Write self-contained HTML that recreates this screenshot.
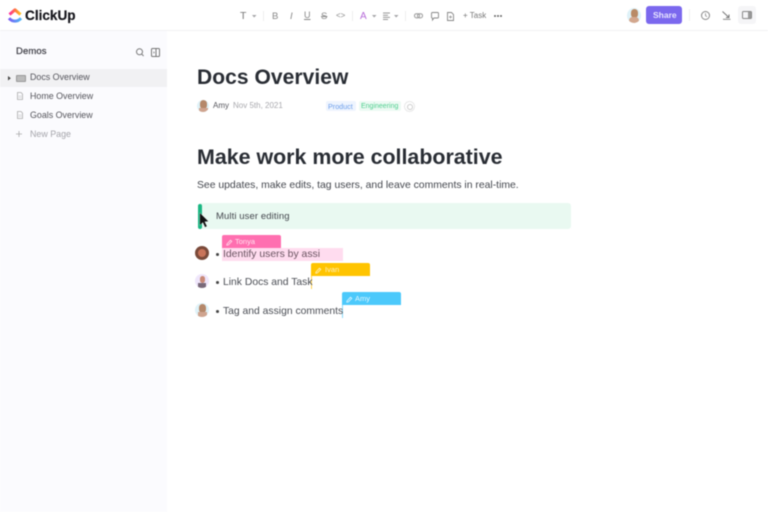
<!DOCTYPE html>
<html><head><meta charset="utf-8">
<style>
html,body{margin:0;padding:0;background:#fff;width:768px;height:512px;overflow:hidden}
#r{position:relative;width:768px;height:512px;overflow:hidden;font-family:"Liberation Sans",sans-serif;filter:blur(.4px)}
.t{position:absolute;white-space:nowrap;line-height:1}
.a{position:absolute}
svg{position:absolute;overflow:visible}
</style></head><body><div id="r">
<div class="a" style="left:0;top:30px;width:768px;height:1px;background:#f1f1f4"></div>
<div class="a" style="left:0;top:31px;width:167px;height:481px;background:#fbfbfe"></div>
<div class="a" style="left:0;top:69px;width:167px;height:18px;background:#f1f1f3"></div>

<!-- logo -->
<svg style="left:8px;top:7px" width="14" height="17" viewBox="0 0 14 17"><defs><linearGradient id="g1" x1="0" x2="1" y1="0" y2="0"><stop offset="0" stop-color="#ff2f9e"/><stop offset=".55" stop-color="#ff7a3c"/><stop offset="1" stop-color="#ffc21f"/></linearGradient><linearGradient id="g2" x1="0" x2="1" y1="0" y2="0"><stop offset="0" stop-color="#7b5cf5"/><stop offset="1" stop-color="#4db8f5"/></linearGradient></defs>
<path d="M1.500 7.500 7 2.800l5.500 4.700" fill="none" stroke="url(#g1)" stroke-width="3" stroke-linejoin="round"/>
<path d="M1 11.300c3.400 3.800 8.600 3.800 12 0" fill="none" stroke="url(#g2)" stroke-width="3"/></svg>
<div class="t" style="left:25px;top:9px;font-size:13.600px;font-weight:700;color:#16161c;-webkit-text-stroke:.2px #16161c">ClickUp</div>

<!-- toolbar -->
<div class="t" style="left:240px;top:11px;font-size:10.500px;color:#777">T</div>
<svg style="left:252px;top:15px" width="5" height="3"><path d="M0 0h4.500L2.200 2.500z" fill="#a5a5a8"/></svg>
<div class="a" style="left:263px;top:11px;width:1px;height:10px;background:#eee"></div>
<div class="t" style="left:272px;top:11.500px;font-size:9.500px;color:#888">B</div>
<div class="t" style="left:290px;top:11.500px;font-size:9.500px;color:#888;font-style:italic">I</div>
<div class="t" style="left:304px;top:11px;font-size:9px;color:#888;text-decoration:underline">U</div>
<div class="t" style="left:321px;top:11.500px;font-size:9.500px;color:#888;text-decoration:line-through">S</div>
<div class="t" style="left:336px;top:12px;font-size:8px;color:#888">&lt;&gt;</div>
<div class="a" style="left:352px;top:11px;width:1px;height:10px;background:#eee"></div>
<div class="t" style="left:360px;top:11.500px;font-size:10px;color:#b56ad8">A</div>
<svg style="left:372px;top:15px" width="5" height="3"><path d="M0 0h4.500L2.200 2.500z" fill="#a5a5a8"/></svg>
<svg style="left:383px;top:12px" width="8" height="8"><path d="M0 1h7M0 3.200h5M0 5.400h7M0 7.500h5" stroke="#999" stroke-width="1"/></svg>
<svg style="left:394px;top:15px" width="5" height="3"><path d="M0 0h4.500L2.200 2.500z" fill="#a5a5a8"/></svg>
<div class="a" style="left:405px;top:11px;width:1px;height:10px;background:#eee"></div>
<svg style="left:414px;top:13px" width="9" height="6"><rect x=".5" y=".7" width="5" height="4.200" rx="2" fill="none" stroke="#999"/><rect x="3.500" y=".7" width="5" height="4.200" rx="2" fill="none" stroke="#999"/></svg>
<svg style="left:431px;top:12px" width="8" height="9"><path d="M.5 1.500Q.5.5 1.500.5h5q1 0 1 1v3.500q0 1-1 1H3L1.500 8V6.200Q.5 6 .5 5z" fill="none" stroke="#888" stroke-width=".9"/></svg>
<svg style="left:447px;top:12px" width="7" height="9"><path d="M.5.500h4l2 2v6h-6z" fill="none" stroke="#888" stroke-width=".9"/><path d="M2 5h3M3.500 3.500v3" stroke="#888" stroke-width=".7"/></svg>
<div class="t" style="left:463px;top:12px;font-size:8px;color:#777">+ Task</div>
<svg style="left:494px;top:15px" width="8" height="2"><circle cx="1" cy="1" r="1" fill="#666"/><circle cx="4" cy="1" r="1" fill="#666"/><circle cx="7" cy="1" r="1" fill="#666"/></svg>

<!-- right -->
<div class="a" style="left:627px;top:8px;width:14px;height:15px;border-radius:50%;background:#dff2f8;overflow:hidden"><div class="a" style="left:4px;top:1px;width:7px;height:9px;border-radius:4px;background:#b98a66"></div><div class="a" style="left:2px;top:9px;width:10px;height:7px;border-radius:4px;background:#d3a78e"></div></div>
<div class="a" style="left:646px;top:6px;width:36px;height:18px;border-radius:3px;background:#7b68ee"></div>
<div class="t" style="left:653px;top:10.500px;font-size:8.500px;font-weight:700;color:#e8e5ff">Share</div>
<div class="a" style="left:689px;top:9px;width:1px;height:12px;background:#f0f0f0"></div>
<svg style="left:701px;top:11px" width="9" height="9"><circle cx="4.500" cy="4.500" r="4" fill="none" stroke="#888" stroke-width="1"/><path d="M4.500 2.200v2.500l1.500 1" fill="none" stroke="#888" stroke-width=".8"/></svg>
<svg style="left:722px;top:11px" width="9" height="9"><path d="M.5.500 7 6.500M7 3.500v3H4" fill="none" stroke="#777" stroke-width="1"/><path d="M1 8.300h7.500" stroke="#888" stroke-width="1"/></svg>
<div class="a" style="left:738px;top:6px;width:18px;height:18px;border-radius:3px;background:#f5f5f7"></div>
<svg style="left:742px;top:11px" width="10" height="8"><rect x=".5" y=".5" width="9" height="7" rx="1" fill="none" stroke="#888"/><rect x="6" y="1" width="3" height="6" fill="#999"/></svg>

<!-- sidebar -->
<div class="t" style="left:16px;top:46.500px;font-size:9.500px;color:#3c3c44;-webkit-text-stroke:.2px #3c3c44;letter-spacing:.1px">Demos</div>
<svg style="left:136px;top:48px" width="8" height="9"><circle cx="3.500" cy="3.800" r="3" fill="none" stroke="#777" stroke-width="1"/><path d="M5.800 6.200 7.600 8" stroke="#777" stroke-width="1"/></svg>
<svg style="left:151px;top:48px" width="9" height="9"><rect x=".5" y=".5" width="8" height="8" rx="1" fill="none" stroke="#777"/><path d="M5 .5v8" stroke="#777"/><path d="M2.500 3.200 3.800 4.500 2.500 5.800z" fill="#777"/></svg>
<svg style="left:8px;top:75.500px" width="3" height="5"><path d="M0 0v4.500L2.800 2.200z" fill="#444"/></svg>
<div class="a" style="left:16px;top:75px;width:8px;height:5px;border:.5px solid #999;background:#bbb;border-radius:1px"></div>
<div class="t" style="left:30px;top:73px;font-size:8.900px;color:#55555c">Docs Overview</div>
<svg style="left:17px;top:92px" width="6" height="8"><path d="M.5.500h3.500l1.500 1.500v5.500h-5z" fill="#fbfbfe" stroke="#aaa" stroke-width=".8"/><path d="M1.500 4h3M1.500 5.500h3" stroke="#bbb" stroke-width=".6"/></svg>
<div class="t" style="left:30px;top:92px;font-size:8.900px;color:#55555c">Home Overview</div>
<svg style="left:17px;top:111px" width="6" height="8"><path d="M.5.500h3.500l1.500 1.500v5.500h-5z" fill="#fbfbfe" stroke="#aaa" stroke-width=".8"/><path d="M1.500 4h3M1.500 5.500h3" stroke="#bbb" stroke-width=".6"/></svg>
<div class="t" style="left:30px;top:111px;font-size:8.900px;color:#55555c">Goals Overview</div>
<svg style="left:16px;top:131px" width="6" height="6"><path d="M3 0v6M0 3h6" stroke="#aaa" stroke-width=".8"/></svg>
<div class="t" style="left:30px;top:130px;font-size:8.900px;color:#a5a5ab">New Page</div>

<!-- main -->
<div class="t" style="left:197px;top:66.500px;font-size:21px;font-weight:700;color:#292d34;letter-spacing:.06px">Docs Overview</div>
<div class="a" style="left:197px;top:100px;width:12px;height:12px;border-radius:50%;background:#dff2f8;overflow:hidden"><div class="a" style="left:3px;top:0;width:7px;height:9px;border-radius:4px;background:#b5886a"></div><div class="a" style="left:2px;top:8px;width:9px;height:6px;background:#cfa48f"></div></div>
<div class="t" style="left:213px;top:102px;font-size:8px;color:#55555c">Amy</div>
<div class="t" style="left:233px;top:102px;font-size:8px;color:#a8a8ad">Nov 5th, 2021</div>
<div class="a" style="left:326px;top:101px;width:30px;height:10px;border-radius:2px;background:#eef4fe"></div>
<div class="t" style="left:328px;top:102.500px;font-size:7.200px;color:#6d9eeb">Product</div>
<div class="a" style="left:359px;top:101px;width:42px;height:10px;border-radius:2px;background:#edfaf3"></div>
<div class="t" style="left:361px;top:102.500px;font-size:7px;color:#4fcf8f">Engineering</div>
<div class="a" style="left:404px;top:101px;width:9px;height:9px;border:.5px solid #e8e8e8;border-radius:50%"></div>
<div class="a" style="left:407px;top:104px;width:4px;height:4px;border:.5px solid #ccc;border-radius:50%"></div>

<div class="t" style="left:197px;top:147px;font-size:21.400px;font-weight:700;color:#292d34">Make work more collaborative</div>
<div class="t" style="left:197px;top:181px;font-size:10.400px;color:#44474e">See updates, make edits, tag users, and leave comments in real-time.</div>

<div class="a" style="left:198px;top:203px;width:373px;height:26px;border-radius:3px;background:#e9f9f1"></div>
<div class="a" style="left:198px;top:204px;width:4px;height:25px;border-radius:2px;background:#1bb783"></div>
<svg style="left:199px;top:212px" width="11" height="17"><path d="M.8.800v12.500l3-2.800 2.200 4.800 2-1-2.200-4.600 3.700-.3z" fill="#111" stroke="#eee" stroke-width=".3"/></svg>
<div class="t" style="left:216px;top:211.500px;font-size:9.500px;color:#44474e;letter-spacing:.1px">Multi user editing</div>

<!-- Line 1 -->
<div class="a" style="left:222px;top:235px;width:59px;height:13px;border-radius:2px 2px 0 0;background:#ff6fb0"></div>
<svg style="left:226px;top:238.500px" width="7" height="7"><path d="M1 5 4.500 1.200l1.300 1.200L2.200 6 .8 6.200z" fill="none" stroke="#ffe0ee" stroke-width=".8"/></svg>
<div class="t" style="left:235px;top:238px;font-size:7.500px;color:#ffe3f0">Tonya</div>
<div class="a" style="left:222px;top:248px;width:121px;height:12.500px;background:#ffdcef"></div>
<div class="a" style="left:195px;top:246px;width:14px;height:14px;border-radius:50%;background:#7a4a3a;overflow:hidden"><div class="a" style="left:3px;top:3px;width:8px;height:8px;border-radius:50%;background:#c9745a"></div></div>
<div class="a" style="left:216px;top:253px;width:3px;height:3px;border-radius:50%;background:#444"></div>
<div class="t" style="left:223px;top:250px;font-size:10.400px;color:#6b5562">Identify users by assi</div>

<!-- Line 2 -->
<div class="a" style="left:311px;top:263px;width:59px;height:13px;border-radius:2px 2px 0 0;background:#ffc400"></div>
<svg style="left:315px;top:266.500px" width="7" height="7"><path d="M1 5 4.500 1.200l1.300 1.200L2.200 6 .8 6.200z" fill="none" stroke="#fff3c8" stroke-width=".8"/></svg>
<div class="t" style="left:325px;top:266px;font-size:7.500px;color:#fff1c0">Ivan</div>
<div class="a" style="left:311px;top:276px;width:1px;height:13px;background:#ffd24d"></div>
<div class="a" style="left:195px;top:274px;width:14px;height:14px;border-radius:50%;background:#efe6fb;overflow:hidden"><div class="a" style="left:4.500px;top:2px;width:5px;height:7px;border-radius:3px;background:#c98a78"></div><div class="a" style="left:3px;top:9px;width:8px;height:5px;background:#7a6a7a"></div></div>
<div class="a" style="left:216px;top:281px;width:3px;height:3px;border-radius:50%;background:#444"></div>
<div class="t" style="left:223px;top:278px;font-size:10.350px;color:#4a4d54">Link Docs and Task</div>

<!-- Line 3 -->
<div class="a" style="left:342px;top:292px;width:59px;height:13px;border-radius:2px 2px 0 0;background:#4cc9fb"></div>
<svg style="left:346px;top:295.500px" width="7" height="7"><path d="M1 5 4.500 1.200l1.300 1.200L2.200 6 .8 6.200z" fill="none" stroke="#e0f6ff" stroke-width=".8"/></svg>
<div class="t" style="left:355px;top:295px;font-size:7.500px;color:#e2f7ff">Amy</div>
<div class="a" style="left:342px;top:305px;width:1px;height:13px;background:#8ad9fa"></div>
<div class="a" style="left:195px;top:303px;width:14px;height:14px;border-radius:50%;background:#dff2f8;overflow:hidden"><div class="a" style="left:4px;top:1px;width:7px;height:9px;border-radius:4px;background:#b5886a"></div><div class="a" style="left:3px;top:9px;width:9px;height:6px;background:#cfa48f"></div></div>
<div class="a" style="left:216px;top:310px;width:3px;height:3px;border-radius:50%;background:#444"></div>
<div class="t" style="left:223px;top:306.500px;font-size:10.350px;color:#4a4d54">Tag and assign comments</div>
</div></body></html>
